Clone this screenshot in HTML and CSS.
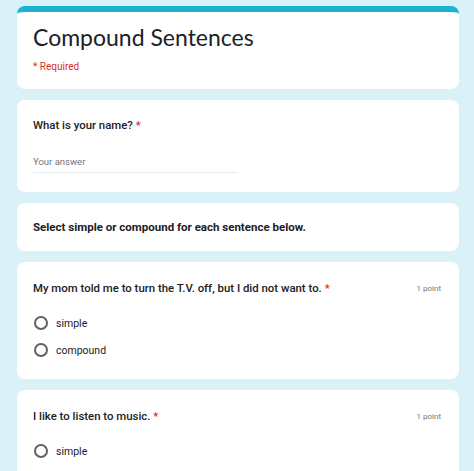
FILE: index.html
```html
<!DOCTYPE html>
<html lang="en">
<head>
<meta charset="utf-8">
<title>Compound Sentences</title>
<link rel="stylesheet" href="styles.css">
</head>
<body>
<main class="form">
  <section class="card header-card">
    <h1 class="title">Compound Sentences</h1>
    <p class="required-note">* Required</p>
  </section>

  <section class="card name-card">
    <div class="question">What is your name? <span class="star">*</span></div>
    <div class="answer">Your answer</div>
  </section>

  <section class="card section-card">
    <div class="section-text">Select simple or compound for each sentence below.</div>
  </section>

  <section class="card question-card">
    <div class="q-head">
      <div class="question">My mom told me to turn the T.V. off, but I did not want to. <span class="star">*</span></div>
      <div class="points">1 point</div>
    </div>
    <div class="options">
      <label class="option"><span class="radio"></span><span class="opt-label">simple</span></label>
      <label class="option"><span class="radio"></span><span class="opt-label">compound</span></label>
    </div>
  </section>

  <section class="card question-card">
    <div class="q-head">
      <div class="question">I like to listen to music. <span class="star">*</span></div>
      <div class="points">1 point</div>
    </div>
    <div class="options">
      <label class="option"><span class="radio"></span><span class="opt-label">simple</span></label>
      <label class="option"><span class="radio"></span><span class="opt-label">compound</span></label>
    </div>
  </section>
</main>
</body>
</html>
```

FILE: styles.css
```css
html, body {
  margin: 0;
  padding: 0;
  background: #d9f1f7;
  height: 100%;
  overflow: hidden;
}

body {
  font-family: Roboto, "Liberation Sans", sans-serif;
  color: #202124;
}

.form {
  display: flex;
  flex-direction: column;
  gap: 11px;
  padding: 6px 15px 0 17px;
}

.card {
  background: #ffffff;
  border-radius: 8px;
  padding: 0 16px;
}

.header-card {
  border-top: 6px solid #1bb3cf;
  padding-top: 10px;
  padding-bottom: 15px;
}

.title {
  margin: 0;
  font-family: Lato, "Open Sans", Roboto, sans-serif;
  font-weight: 400;
  font-size: 23px;
  line-height: 30px;
  color: #202124;
}

.required-note {
  margin: 8px 0 0;
  font-size: 10px;
  line-height: 14px;
  color: #d93025;
}

.name-card {
  padding-top: 17px;
  padding-bottom: 19px;
}

.question {
  font-size: 11.4px;
  line-height: 16px;
  font-weight: 500;
  color: #202124;
}

.star {
  color: #d93025;
}

.answer {
  margin-top: 22px;
  width: 205px;
  font-size: 9.5px;
  line-height: 14px;
  color: #70757a;
  padding-bottom: 3px;
  border-bottom: 1px solid #e8eaed;
}

.section-card {
  padding-top: 16px;
  padding-bottom: 16px;
}

.section-text {
  font-size: 11.5px;
  line-height: 16px;
  font-weight: 700;
  color: #202124;
}

.question-card {
  padding-top: 18px;
  padding-bottom: 19px;
}

.q-head {
  display: flex;
  justify-content: space-between;
  align-items: center;
}

.points {
  font-size: 8px;
  color: #70757a;
  padding-right: 2px;
}

.options {
  display: flex;
  flex-direction: column;
  gap: 7px;
  margin-top: 17px;
}

.option {
  display: flex;
  align-items: center;
  gap: 8px;
  height: 20px;
}

.radio {
  box-sizing: border-box;
  width: 14px;
  height: 14px;
  border: 2px solid #5f6368;
  border-radius: 50%;
  flex: none;
  margin-left: 1px;
}

.opt-label {
  font-size: 10.5px;
  color: #202124;
}
```
